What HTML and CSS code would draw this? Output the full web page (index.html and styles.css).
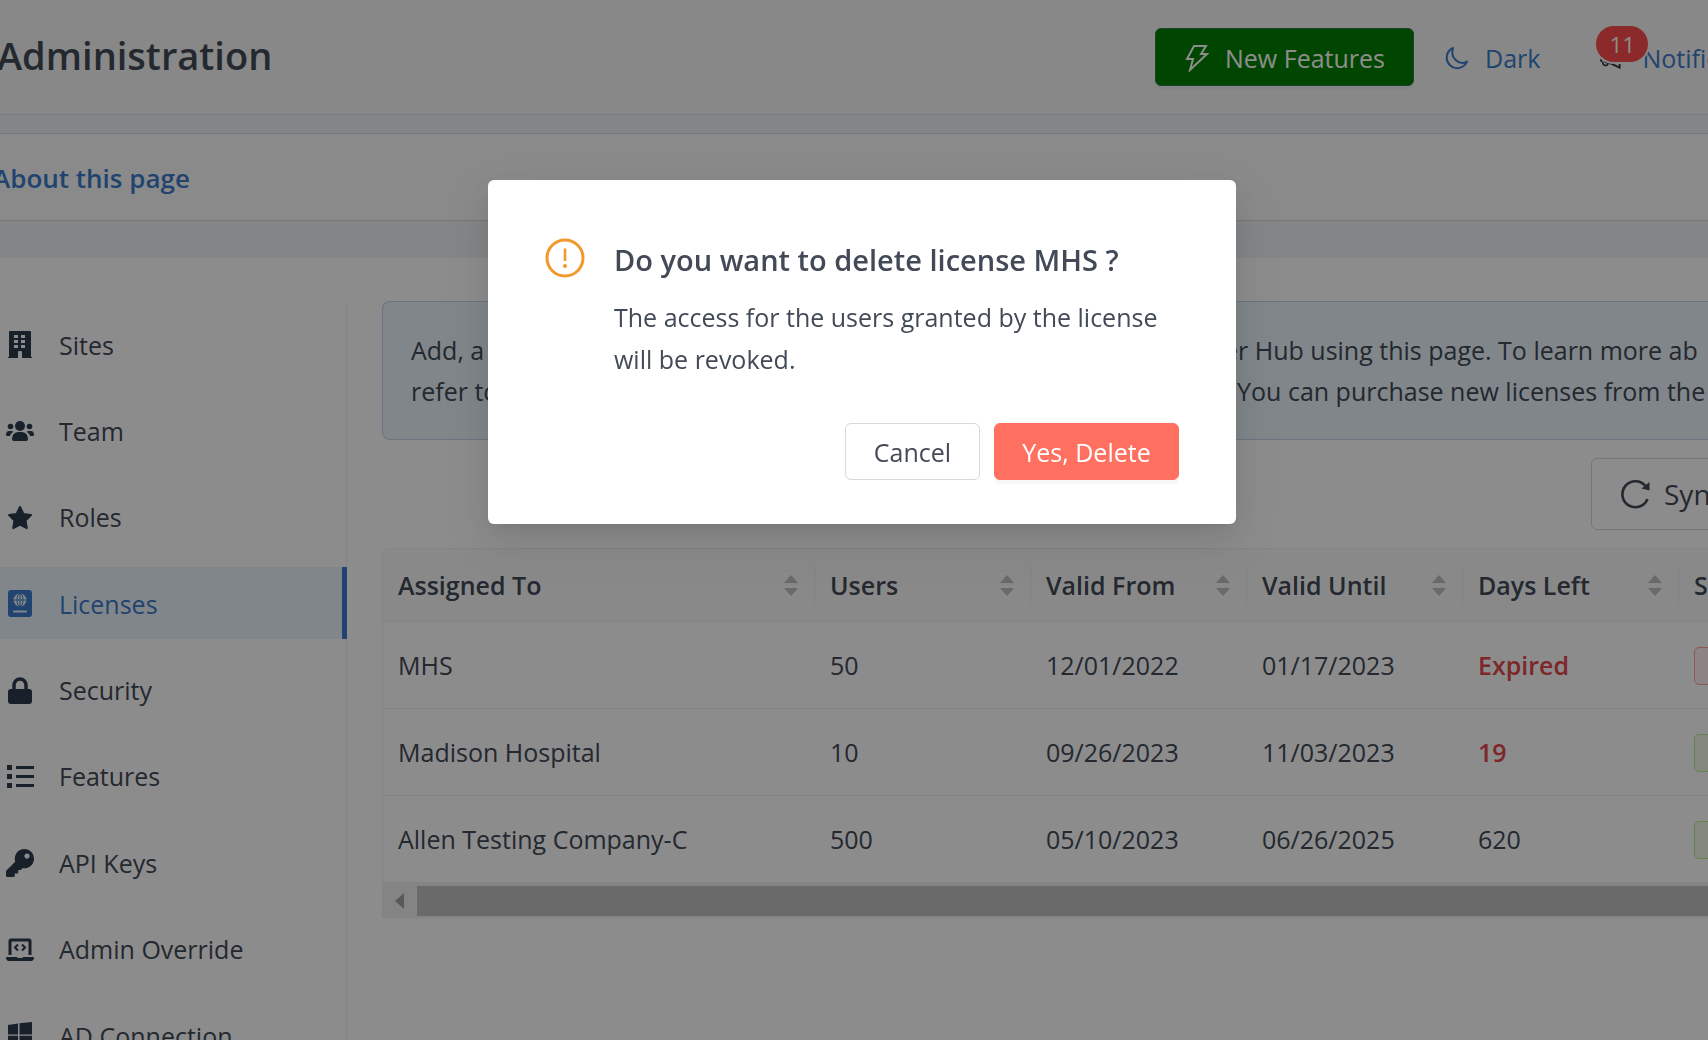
FILE: index.html
```html
<!DOCTYPE html>
<html lang="en">
<head>
<meta charset="utf-8">
<title>Administration</title>
<link rel="stylesheet" href="styles.css">
</head>
<body>
<header class="topbar">
  <h1 class="topbar-title">Administration</h1>
  <div class="actions">
    <button class="btn-features" type="button">
      <svg class="icon-bolt" viewBox="0 0 24 28" fill="none" stroke="currentColor" stroke-width="2"><path d="M9 2h12l-5 8h6L5 26l3-11H2z"/></svg>
      New Features
    </button>
    <a class="action dark" href="#">
      <svg class="icon-moon" viewBox="0 0 24 24" fill="none" stroke="currentColor" stroke-width="2" stroke-linejoin="round"><path d="M9 2a10.500 10.500 0 1 0 14 13.500C15 20 6 12 9 2z"/></svg>
      Dark
    </a>
    <a class="action notif" href="#">
      <span class="notif-icon">
        <svg class="icon-horn" viewBox="0 0 1024 1024" fill="#333b47"><path d="M880 112c-4 0-8 1-12 3L500 322H184c-18 0-32 14-32 32v268c0 18 14 32 32 32h35c-2 10-3 20-3 30 0 72 58 130 130 130 60 0 110-41 126-96l396 191c16 6 32-4 32-20V144c0-16-11-32-20-32zM346 752c-38 0-68-30-68-68 0-9 2-18 5-26l127 61c-12 20-36 33-64 33zM828 815L519 650l-20-12H224V394h275l20-12L828 209v606z"/></svg>
        <span class="badge">11</span>
      </span>
      Notifications
    </a>
  </div>
</header>

<section class="about"><a href="#">About this page</a></section>

<main class="panel">
  <nav class="side">
    <ul>
      <li><a href="#"><svg viewBox="0 0 28 28"><path fill="currentColor" fill-rule="evenodd" d="M4 0h20q1 0 1 1v25h1v1H16v-6q0-1-1-1h-2q-1 0-1 1v6H2v-1h1V1q0-1 1-1zM8 4v3h4V4zm7 0v3h4V4zM8 9v3h4V9zm7 0v3h4V9zM8 14v3h4v-3zm7 0v3h4v-3z"/></svg>Sites</a></li>
      <li><a href="#"><svg viewBox="0 0 28 28" fill="currentColor"><circle cx="14" cy="9" r="5"/><circle cx="4.500" cy="9.500" r="2.800"/><circle cx="23.500" cy="9.500" r="2.800"/><path d="M12 15h4q6 1 6 7 0 2-2 2H8q-2 0-2-2 0-6 6-7zM3 14h3q1 0 1 1-3 2-3 4H1q-1 0-1-1 0-4 3-4zM25 14h-3q-1 0-1 1 3 2 3 4h3q1 0 1-1 0-4-3-4z"/></svg>Team</a></li>
      <li><a href="#"><svg viewBox="0 0 28 28" fill="currentColor" stroke="currentColor" stroke-width="2" stroke-linejoin="round"><path d="M14 3l3.400 7 7.600 1.100-5.500 5.400 1.300 7.600-6.800-3.600-6.800 3.600 1.300-7.600L3 11.100l7.600-1.100z"/></svg>Roles</a></li>
      <li><a class="selected" href="#" aria-current="page"><svg viewBox="0 0 28 28"><rect x="2" y="0" width="24" height="27" rx="3" fill="currentColor"/><circle cx="14" cy="10" r="6.500" fill="#ebf5fc"/><g fill="none" stroke="currentColor" stroke-width="1"><path d="M7 10h14M14 3v14"/><ellipse cx="14" cy="10" rx="3" ry="6.500"/></g><path d="M8 21.500h12" stroke="#ebf5fc" stroke-width="2" stroke-linecap="round"/></svg>Licenses</a></li>
      <li><a href="#"><svg viewBox="0 0 28 28"><rect x="2" y="12" width="24" height="15" rx="3" fill="currentColor"/><path d="M8 13V8a6 6 0 0 1 12 0v5" fill="none" stroke="currentColor" stroke-width="3.500"/></svg>Security</a></li>
      <li><a href="#"><svg viewBox="0 0 28 28" fill="currentColor"><path d="M1 2h5v5H1zM1 11h5v5H1zM1 20h5v5H1zM10 3h18v3H10zM10 12h18v3H10zM10 21h18v3H10z"/></svg>Features</a></li>
      <li><a href="#"><svg viewBox="0 0 512 512" fill="currentColor"><path d="M512 176c0 97.200-78.800 176-176 176-11.200 0-22.200-1.100-32.800-3.100l-24 27c-4.600 5.100-11.100 8.100-17.900 8.100H224v40c0 13.300-10.700 24-24 24h-40v40c0 13.300-10.700 24-24 24H24c-13.300 0-24-10.700-24-24v-78.100c0-6.400 2.500-12.500 7-17l161.800-161.800A175.900 175.900 0 0 1 336 0c97.500 0 176 78.500 176 176zM336 128c0 26.500 21.500 48 48 48s48-21.500 48-48-21.500-48-48-48-48 21.500-48 48z"/></svg>API Keys</a></li>
      <li><a href="#"><svg viewBox="0 0 28 28" fill="none" stroke="currentColor"><path d="M4 19V5q0-1 1-1h18q1 0 1 1v14" stroke-width="3"/><path d="M0 21h11q0 1 1 1h4q1 0 1-1h11q0 4-3 4H3q-3 0-3-4z" fill="currentColor" stroke="none"/><path d="M12 8.500L9 11.500l3 3M16 8.500l3 3-3 3" stroke-width="2"/></svg>Admin Override</a></li>
      <li><a href="#"><svg viewBox="0 0 28 28" fill="currentColor"><path d="M2 3l10-1.500v11H2zM13.500 1.300L26 0v12.500H13.500zM2 13.700h10v11L2 23.300zM13.500 13.700H26v13l-12.500-1.800z"/></svg>AD Connection</a></li>
    </ul>
  </nav>

  <div class="content">
    <div class="alert">
      <span>Add, a</span><span>er Hub using this page. To learn more ab</span>
      <span>refer to</span><span>. You can purchase new licenses from the</span>
    </div>
    <div class="toolbar">
      <button class="btn-sync" type="button">
        <svg class="icon-sync" viewBox="0 0 30 30"><path d="M27.500 20A13 13 0 1 1 25.500 7" fill="none" stroke="currentColor" stroke-width="2.600"/><path d="M29.500 3v8.500l-8-2z" fill="currentColor"/></svg>
        Sync
      </button>
    </div>
    <div class="table-box">
      <table class="licenses">
        <colgroup><col class="c-wide"><col class="c"><col class="c"><col class="c"><col class="c"><col class="c"></colgroup>
        <thead>
          <tr>
            <th scope="col"><span class="th">Assigned To<i class="sorter"></i></span></th>
            <th scope="col"><span class="th">Users<i class="sorter"></i></span></th>
            <th scope="col"><span class="th">Valid From<i class="sorter"></i></span></th>
            <th scope="col"><span class="th">Valid Until<i class="sorter"></i></span></th>
            <th scope="col"><span class="th">Days Left<i class="sorter"></i></span></th>
            <th scope="col"><span class="th">Status</span></th>
          </tr>
        </thead>
        <tbody>
          <tr><td>MHS</td><td>50</td><td>12/01/2022</td><td>01/17/2023</td><td class="warn">Expired</td><td><span class="tag red"></span></td></tr>
          <tr><td>Madison Hospital</td><td>10</td><td>09/26/2023</td><td>11/03/2023</td><td class="warn">19</td><td><span class="tag green"></span></td></tr>
          <tr><td>Allen Testing Company-C</td><td>500</td><td>05/10/2023</td><td>06/26/2025</td><td>620</td><td><span class="tag green"></span></td></tr>
        </tbody>
      </table>
      <div class="scrollbar"><span class="scroll-arrow"></span><span class="scroll-thumb"></span></div>
    </div>
  </div>
</main>

<div class="overlay">
  <div class="modal" role="dialog" aria-modal="true" aria-labelledby="dlg-title">
    <svg class="icon-warn" viewBox="0 0 40 40"><circle cx="20" cy="20" r="18" fill="none" stroke="currentColor" stroke-width="3"/><path d="M18.700 10.500h2.600v12.500h-2.600z" fill="currentColor"/><circle cx="20" cy="28" r="2" fill="currentColor"/></svg>
    <div class="modal-body">
      <h2 id="dlg-title">Do you want to delete license MHS ?</h2>
      <p>The access for the users granted by the license will be revoked.</p>
    </div>
    <div class="modal-actions">
      <button class="btn-cancel" type="button">Cancel</button>
      <button class="btn-delete" type="button">Yes, Delete</button>
    </div>
  </div>
</div>
</body>
</html>
```
FILE: styles.css
```css
* { box-sizing: border-box; }

body {
  margin: 0;
  height: 100vh;
  overflow: hidden;
  background: #f0f2f5;
  color: #424a57;
  font-family: "Open Sans", "Noto Sans", sans-serif;
  font-size: 25px;
  line-height: 41px;
  white-space: nowrap;
}

a { color: #3c7bca; text-decoration: none; }
button { font: inherit; cursor: pointer; }
svg { flex: none; display: block; }

/* Top bar */
.topbar {
  display: flex;
  align-items: center;
  justify-content: space-between;
  height: 115px;
  background: #f7f7f7;
  border-bottom: 1px solid #dcdfe3;
}
.topbar-title {
  margin: 0 0 4px -3px;
  font-size: 38px;
  line-height: 56px;
  font-weight: 600;
}
.actions {
  display: flex;
  align-items: center;
  flex: none;
  width: 553px;
}
.btn-features {
  display: flex;
  align-items: center;
  flex: none;
  gap: 16px;
  width: 259px;
  height: 58px;
  padding: 2px 0 0 29px;
  border: 1px solid #2b7d50;
  border-radius: 6px;
  background: #008000;
  color: #fff;
  box-shadow: 0 4px 0 rgba(0, 0, 0, .02);
}
.icon-bolt { width: 24px; height: 28px; }
.action { display: flex; align-items: center; gap: 17px; padding-top: 2px; }
.dark { margin-left: 30px; }
.icon-moon { width: 24px; height: 24px; }
.notif { margin-left: 56px; gap: 18px; }
.notif-icon { position: relative; }
.icon-horn { width: 28px; height: 28px; }
.badge {
  position: absolute;
  left: 0;
  top: -18px;
  width: 52px;
  height: 36px;
  border-radius: 18px;
  background: #ff4d4f;
  box-shadow: 0 0 0 2px #f7f7f7;
  color: #fff;
  font-size: 22px;
  line-height: 36px;
  text-align: center;
}

/* About strip */
.about {
  height: 88px;
  margin: 18px 0 37px;
  padding: 24px 0 0;
  background: #fbfbfb;
  border: solid #d9dadc;
  border-width: 1px 0;
}
.about a { margin-left: -7px; font-size: 26px; font-weight: 600; }

/* Panel */
.panel {
  display: flex;
  min-height: calc(100vh - 258px);
  padding-top: 43px;
  background: #fff;
}
.side { flex: 0 0 347px; border-right: 1px solid #f0f0f0; }
.side ul {
  display: grid;
  align-content: space-between;
  height: 770px;
  margin: 0 -1px 0 0;
  padding: 7px 0 0;
  list-style: none;
}
.side a {
  display: flex;
  align-items: center;
  gap: 25px;
  height: 72px;
  padding: 2px 0 0 6px;
  color: #424a57;
}
.side svg { width: 28px; height: 28px; color: #2d3b4e; }
.side .selected {
  background: #ebf5fc;
  color: #3c7bca;
  border-right: 5px solid #3c7bca;
}
.side .selected svg { color: #3c7bca; }

.content { flex: 1; min-width: 0; padding-left: 35px; }
.alert {
  display: grid;
  grid-template-columns: 1fr 484px;
  padding: 28px 0 27px 28px;
  border: 1px solid #bfd4ea;
  border-right: 0;
  border-radius: 8px 0 0 8px;
  background: #e9f4fa;
}
.alert span { overflow: hidden; }

.toolbar {
  display: flex;
  justify-content: flex-end;
  padding: 18px 0;
}
.btn-sync {
  display: flex;
  align-items: center;
  gap: 14px;
  width: 160px;
  height: 72px;
  margin-right: -43px;
  padding: 0 0 0 28px;
  border: 1px solid #d9d9d9;
  border-radius: 6px;
  background: #fff;
  color: #424a57;
  font-size: 28px;
}
.icon-sync { width: 30px; height: 30px; }

/* Table */
.table-box { overflow: hidden; border: solid #f0f0f0; border-width: 1px 0 0 1px; border-radius: 6px 0 0 0; }
.licenses {
  width: 1512px;
  table-layout: fixed;
  border-collapse: separate;
  border-spacing: 0;
}
.c-wide { width: 432px; }
.c { width: 216px; }
.licenses th {
  height: 73px;
  padding: 0;
  background: #fafafa;
  border-bottom: 1px solid #f0f0f0;
  text-align: left;
  font-weight: 600;
}
.th {
  display: flex;
  align-items: center;
  justify-content: space-between;
  padding: 0 16px 0 15px;
  border-right: 1px solid #ededed;
}
.sorter { display: grid; gap: 5px; }
.sorter::before, .sorter::after {
  content: "";
  border: solid transparent;
  border-width: 0 7px;
}
.sorter::before { border-bottom: 8px solid #bfbfbf; }
.sorter::after { border-top: 8px solid #bfbfbf; }
.licenses td {
  height: 87px;
  padding: 1px 15px 0;
  border-bottom: 1px solid #f0f0f0;
}
.licenses .warn { color: #e5484d; font-weight: 600; }
.tag {
  display: block;
  width: 120px;
  height: 38px;
  border: 1px solid;
  border-radius: 5px;
}
.red { background: #fff1f0; border-color: #ffa39e; }
.green { background: #f0fae4; border-color: #b7eb8f; }

.scrollbar {
  display: flex;
  align-items: center;
  height: 35px;
  background: #f1f1f1;
}
.scroll-arrow {
  margin: 0 13px 0 12px;
  border: solid transparent;
  border-width: 8px 9px 8px 0;
  border-right-color: #a3a3a3;
}
.scroll-thumb { flex: 1; height: 30px; background: #c1c1c1; }

/* Dialog */
.overlay {
  position: fixed;
  inset: 0;
  display: flex;
  justify-content: center;
  align-items: flex-start;
  padding: 180px 0 0 16px;
  background: rgba(0, 0, 0, .45);
}
.modal {
  display: grid;
  grid-template-columns: 40px 1fr;
  column-gap: 29px;
  width: 748px;
  padding: 58px 57px 44px;
  border-radius: 6px;
  background: #fff;
  box-shadow: 0 6px 12px -8px rgba(0, 0, 0, .12), 0 12px 32px rgba(0, 0, 0, .08), 0 18px 54px 16px rgba(0, 0, 0, .05);
  white-space: normal;
}
.icon-warn { width: 40px; height: 40px; color: #f09a2b; }
.modal h2 {
  margin: 0;
  font-size: 29px;
  line-height: 44px;
  font-weight: 600;
}
.modal p { margin: 14px 0 0; line-height: 42px; }
.modal-actions {
  grid-column: 1 / -1;
  display: flex;
  justify-content: flex-end;
  gap: 14px;
  margin-top: 43px;
}
.btn-cancel, .btn-delete {
  height: 57px;
  padding: 2px 0 0;
  border: 1px solid #d9d9d9;
  border-radius: 6px;
  background: #fff;
  color: #424a57;
}
.btn-cancel { width: 135px; }
.btn-delete {
  width: 185px;
  border-color: #ff7061;
  background: #ff7061;
  color: #fff;
  box-shadow: 0 4px 0 rgba(0, 0, 0, .03);
}
```
